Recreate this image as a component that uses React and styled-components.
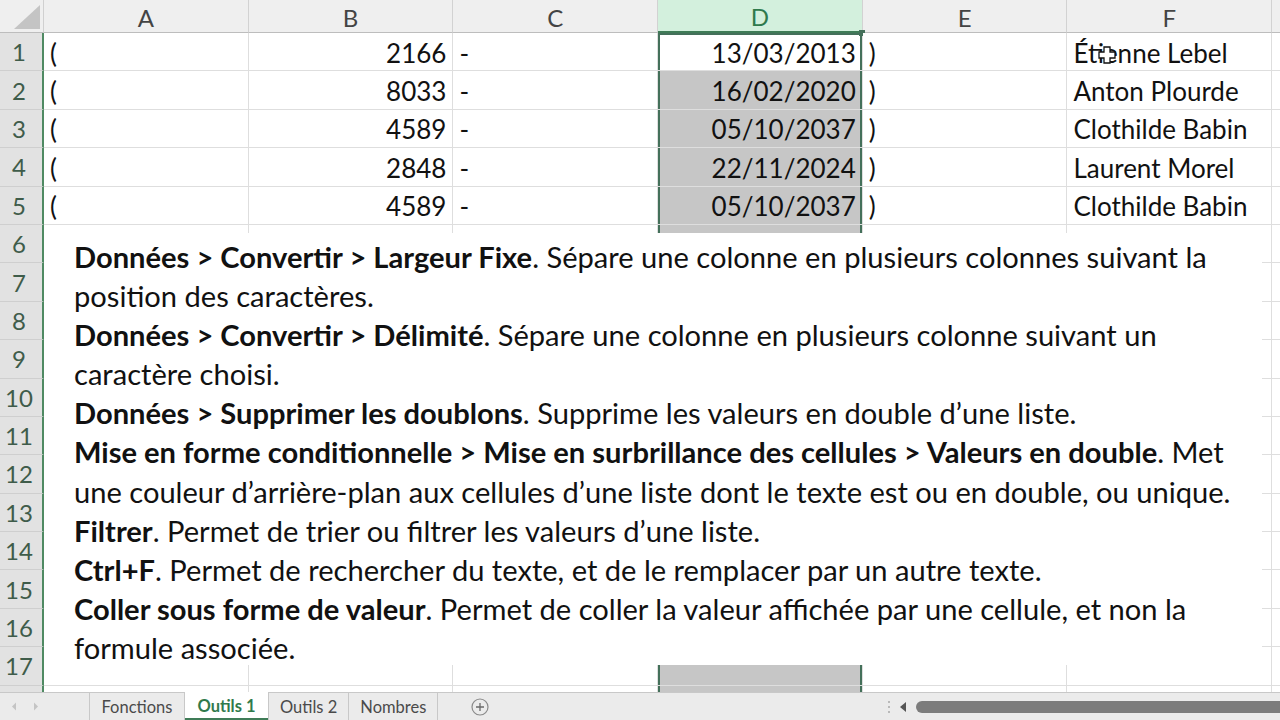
import React from 'react';
import styled, { createGlobalStyle } from 'styled-components';

const GlobalStyle = createGlobalStyle`
  html, body {
    margin: 0;
    padding: 0;
    background: #ffffff;
  }
  body {
    font-family: Lato, "Open Sans", sans-serif;
    overflow: hidden;
  }
`;

const COL_W = 204.7;
const ROW_H = 38.4;

const Window = styled.div`
  width: 1280px;
  height: 720px;
  display: flex;
  flex-direction: column;
  overflow: hidden;
`;

const SheetArea = styled.div`
  position: relative;
  height: 692px;
  overflow: hidden;
  flex: none;
`;

const Grid = styled.div`
  display: grid;
  grid-template-columns: 44px repeat(7, ${COL_W}px);
  grid-template-rows: 33px;
  grid-auto-rows: ${ROW_H}px;
`;

const Corner = styled.div`
  background: #efefef;
  border-right: 1px solid #d0d0d0;
  border-bottom: 1px solid #bdbdbd;
  position: relative;
  overflow: hidden;

  &::after {
    content: '';
    position: absolute;
    right: 3px;
    bottom: 3px;
    width: 0;
    height: 0;
    border-left: 26px solid transparent;
    border-bottom: 24px solid #c4c4c4;
  }
`;

const ColHead = styled.div`
  display: flex;
  align-items: center;
  justify-content: center;
  font-size: 24px;
  color: ${(p) => (p.$active ? '#2f7a4c' : '#444444')};
  background: ${(p) => (p.$active ? '#d3f0dd' : '#efefef')};
  border-right: 1px solid #d2d2d2;
  border-bottom: ${(p) => (p.$active ? '2px solid #3f7c57' : '1px solid #bdbdbd')};
  box-sizing: border-box;
  padding-top: 2px;
`;

const RowHead = styled.div`
  display: flex;
  align-items: center;
  justify-content: center;
  font-size: 24px;
  color: #3f5c4a;
  background: #e2e2e2;
  border-right: 2px solid #4f8a63;
  border-bottom: 1px solid #cfcfcf;
  box-sizing: border-box;
  padding-right: 4px;
`;

const Cell = styled.div`
  display: flex;
  align-items: center;
  justify-content: ${(p) => (p.$align === 'right' ? 'flex-end' : 'flex-start')};
  padding: 2px 6px 0 6px;
  font-size: 26px;
  color: #111111;
  white-space: nowrap;
  box-sizing: border-box;
  border-right: 1px solid #dedede;
  border-bottom: 1px solid #dedede;
  background: ${(p) => (p.$sel === 'range' ? '#c6c6c6' : '#ffffff')};
  box-shadow: ${(p) =>
    p.$sel === 'active'
      ? 'inset 2px 2px 0 #44705a, inset -2px 0 0 #44705a'
      : p.$sel === 'range'
      ? 'inset 2px 0 0 #44705a, inset -2px 0 0 #44705a'
      : 'none'};
  position: relative;
`;

const FillHandle = styled.span`
  position: absolute;
  right: -3px;
  top: -3px;
  width: 6px;
  height: 6px;
  background: #44705a;
`;

const Cursor = styled.svg`
  position: absolute;
  left: 1098px;
  top: 46px;
  width: 18px;
  height: 18px;
`;

const TextBox = styled.div`
  position: absolute;
  left: 44px;
  top: 233px;
  width: 1218px;
  height: 432px;
  background: #ffffff;
  padding: 4px 0 0 30px;
  box-sizing: border-box;
  font-size: 29.1px;
  line-height: 39.1px;
  color: #111111;
`;

const Line = styled.div`
  white-space: nowrap;
`;

const Strong = styled.b`
  font-weight: 700;
`;

const TabBar = styled.div`
  height: 28px;
  flex: none;
  display: flex;
  align-items: stretch;
  background: #ebebeb;
  border-top: 1px solid #c8c8c8;
  box-sizing: border-box;
  font-size: 16.5px;
  color: #4a4a4a;
`;

const NavArrows = styled.div`
  width: 90px;
  display: flex;
  align-items: center;
  gap: 16px;
  padding-left: 11px;
  box-sizing: border-box;
  border-right: 1px solid #c8c8c8;
`;

const Tab = styled.div`
  display: flex;
  align-items: center;
  padding: 0 ${(p) => p.$pad}px;
  border-right: 1px solid #c8c8c8;
  background: ${(p) => (p.$active ? '#ffffff' : 'transparent')};
  color: ${(p) => (p.$active ? '#2f7a4c' : '#4a4a4a')};
  font-weight: ${(p) => (p.$active ? 700 : 400)};
  box-shadow: ${(p) => (p.$active ? 'inset 0 -2px 0 #3f7c57' : 'none')};
  margin-top: ${(p) => (p.$active ? '-1px' : '0')};
`;

const AddSheet = styled.div`
  display: flex;
  align-items: center;
  margin-left: 32px;
`;

const Spacer = styled.div`
  flex: 1;
`;

const ScrollZone = styled.div`
  width: 398px;
  display: flex;
  align-items: center;
  gap: 8px;
  padding-left: 6px;
  box-sizing: border-box;
`;

const Dots = styled.div`
  display: flex;
  flex-direction: column;
  gap: 3px;
  span {
    width: 2px;
    height: 2px;
    background: #a8a8a8;
    border-radius: 1px;
  }
`;

const Thumb = styled.div`
  flex: 1;
  height: 12px;
  border-radius: 6px 0 0 6px;
  background: #7c7c7c;
`;

const columns = ['A', 'B', 'C', 'D', 'E', 'F', ''];

const rows = [
  ['2166', '13/03/2013', 'Étienne Lebel'],
  ['8033', '16/02/2020', 'Anton Plourde'],
  ['4589', '05/10/2037', 'Clothilde Babin'],
  ['2848', '22/11/2024', 'Laurent Morel'],
  ['4589', '05/10/2037', 'Clothilde Babin'],
];

// row 18 only peeks out above the sheet tabs, its number is hidden
const VISIBLE_ROWS = 17;
const ROW_COUNT = 18;

function cellsFor(r) {
  const data = rows[r - 1];
  const dSel = r === 1 ? 'active' : 'range';
  if (!data) {
    return columns.map((c, i) => (
      <Cell key={i} $sel={c === 'D' ? dSel : undefined} />
    ));
  }
  return [
    <Cell key="A">(</Cell>,
    <Cell key="B" $align="right">{data[0]}</Cell>,
    <Cell key="C">-</Cell>,
    <Cell key="D" $align="right" $sel={dSel}>
      {data[1]}
      {r === 1 && <FillHandle />}
    </Cell>,
    <Cell key="E">)</Cell>,
    <Cell key="F">{data[2]}</Cell>,
    <Cell key="G" />,
  ];
}

const Arrow = ({ dir }) => (
  <svg width="6" height="9" viewBox="0 0 6 9">
    <path d={dir === 'left' ? 'M5 0.5L1 4.5l4 4z' : 'M1 0.5l4 4-4 4z'} fill="#c4c4c4" />
  </svg>
);

export default function App() {
  const rowNums = Array.from({ length: ROW_COUNT }, (_, i) => i + 1);

  return (
    <Window>
      <GlobalStyle />
      <SheetArea>
        <Grid>
          <Corner />
          {columns.map((c, i) => (
            <ColHead key={i} $active={c === 'D'}>{c}</ColHead>
          ))}
          {rowNums.map((r) => (
            <React.Fragment key={r}>
              <RowHead>{r <= VISIBLE_ROWS ? r : ''}</RowHead>
              {cellsFor(r)}
            </React.Fragment>
          ))}
        </Grid>

        <TextBox>
          <Line><Strong>Données &gt; Convertir &gt; Largeur Fixe</Strong>. Sépare une colonne en plusieurs colonnes suivant la</Line>
          <Line>position des caractères.</Line>
          <Line><Strong>Données &gt; Convertir &gt; Délimité</Strong>. Sépare une colonne en plusieurs colonne suivant un</Line>
          <Line>caractère choisi.</Line>
          <Line><Strong>Données &gt; Supprimer les doublons</Strong>. Supprime les valeurs en double d’une liste.</Line>
          <Line><Strong>Mise en forme conditionnelle &gt; Mise en surbrillance des cellules &gt; Valeurs en double</Strong>. Met</Line>
          <Line>une couleur d’arrière-plan aux cellules d’une liste dont le texte est ou en double, ou unique.</Line>
          <Line><Strong>Filtrer</Strong>. Permet de trier ou filtrer les valeurs d’une liste.</Line>
          <Line><Strong>Ctrl+F</Strong>. Permet de rechercher du texte, et de le remplacer par un autre texte.</Line>
          <Line><Strong>Coller sous forme de valeur</Strong>. Permet de coller la valeur affichée par une cellule, et non la</Line>
          <Line>formule associée.</Line>
        </TextBox>

        <Cursor viewBox="0 0 18 18">
          <path
            d="M6 1h6v5h5v6h-5v5H6v-5H1V6h5z"
            fill="#ffffff"
            stroke="#111111"
            strokeWidth="1.3"
          />
        </Cursor>
      </SheetArea>

      <TabBar>
        <NavArrows>
          <Arrow dir="left" />
          <Arrow dir="right" />
        </NavArrows>
        <Tab $pad={11.5}>Fonctions</Tab>
        <Tab $pad={12.5} $active>Outils 1</Tab>
        <Tab $pad={11}>Outils 2</Tab>
        <Tab $pad={11}>Nombres</Tab>
        <AddSheet>
          <svg width="20" height="20" viewBox="0 0 20 20">
            <circle cx="10" cy="10" r="8" fill="none" stroke="#8a8a8a" strokeWidth="1.2" />
            <path d="M10 6v8M6 10h8" stroke="#6a6a6a" strokeWidth="1.3" />
          </svg>
        </AddSheet>
        <Spacer />
        <ScrollZone>
          <Dots><span /><span /><span /></Dots>
          <svg width="10" height="12" viewBox="0 0 10 12">
            <path d="M8 1L2 6l6 5z" fill="#555555" />
          </svg>
          <Thumb />
        </ScrollZone>
      </TabBar>
    </Window>
  );
}
